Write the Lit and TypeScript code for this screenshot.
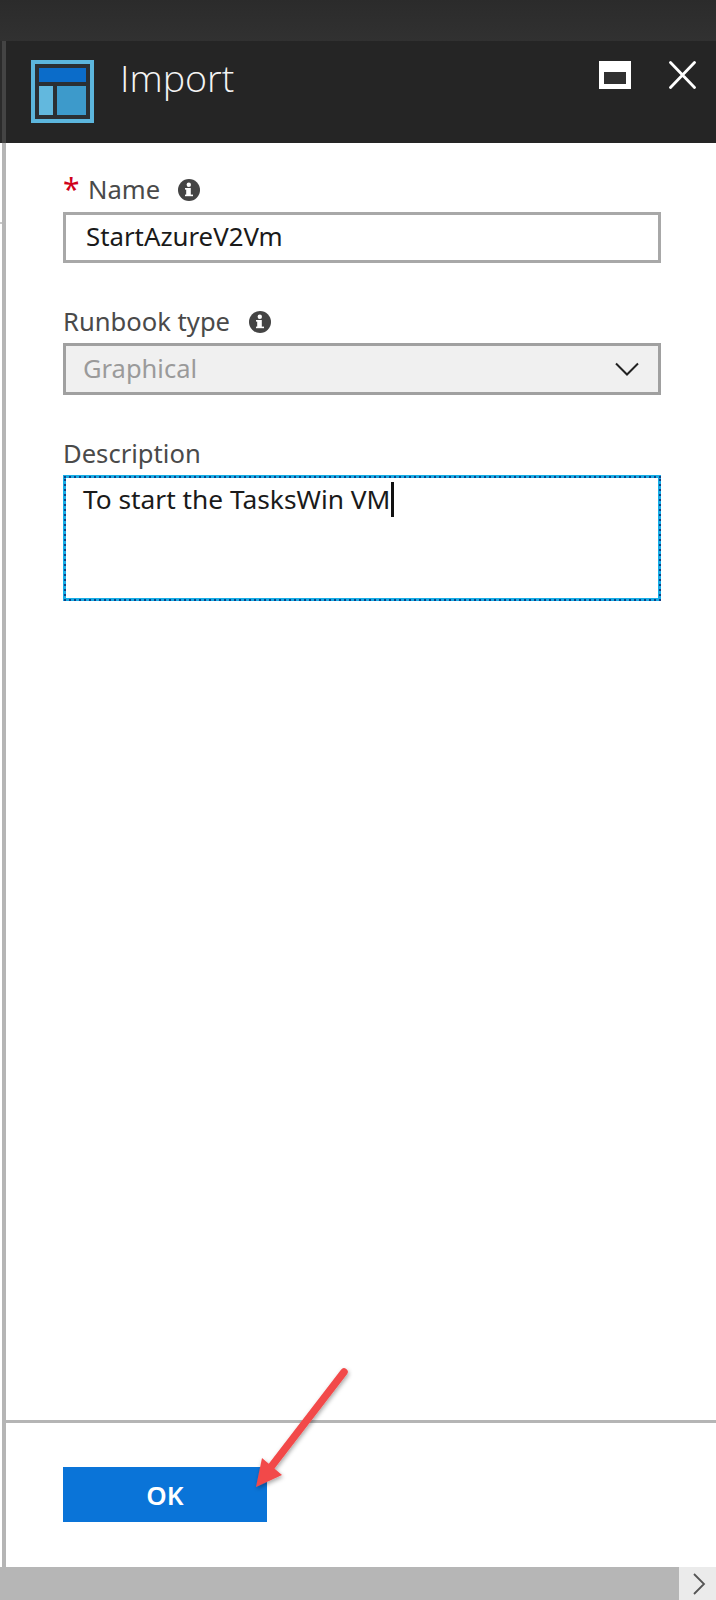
import { LitElement, html, css } from "lit";
import { customElement } from "lit/decorators.js";

const info = html`<svg class="info" viewBox="0 0 22 22"><circle cx="11" cy="11" r="11" fill="#444"/><rect x="8.2" y="9" width="4.6" height="8" fill="#fff"/><rect x="7" y="9" width="3" height="1.6" fill="#fff"/><rect x="7" y="15.6" width="8" height="1.6" fill="#fff"/><circle cx="10.8" cy="5.8" r="2.2" fill="#fff"/></svg>`;

@customElement("app-root")
export class AppRoot extends LitElement {
  static styles = css`
    :host { display: flex; flex-direction: column; width: 716px; height: 1600px; background: #fff; font-family: "Noto Sans", "Open Sans", sans-serif; position: relative; overflow: hidden; }
    .top { height: 41px; flex: none; background: linear-gradient(#2b2b2b, #313131); }
    .head { height: 102px; flex: none; background: #252525; border-left: 4px solid #444; margin-left: 2px; display: flex; padding: 19px 20px 0 25px; box-sizing: border-box; box-shadow: -2px 0 0 #2b2b2b; }
    .logo { width: 63px; height: 63px; flex: none; }
    .title { margin: -8px 0 0 26px; font: 300 37.6px/52px "Open Sans", sans-serif; color: #f4f4f4; flex: 1; }
    .win { width: 32px; height: 28px; margin-top: 1px; flex: none; }
    .close { width: 27px; height: 28px; margin: 1px 0 0 38px; flex: none; }
    .body { flex: 1; margin-left: 2px; border-left: 4px solid #b5b5b5; display: flex; flex-direction: column; min-height: 0; }
    .form { flex: 1; padding: 0 55px 0 57px; display: flex; flex-direction: column; }
    .label { display: flex; align-items: center; font-size: 25.6px; line-height: 32px; color: #4a4a4a; }
    .label.name { margin-top: 27px; height: 42px; padding-bottom: 2px; box-sizing: border-box; }
    .label.rb { margin-top: 39px; height: 41px; padding-bottom: 2px; box-sizing: border-box; }
    .label.desc { margin-top: 37px; height: 43px; }
    .star { color: #d0021b; font-size: 30px; line-height: 30px; width: 25px; align-self: flex-start; margin-top: 4px; }
    .info { width: 22px; height: 22px; margin-left: 18px; flex: none; }
    .rb .info { margin-left: 19px; }
    .field { box-sizing: border-box; height: 51px; border: 3px solid #a8a8a8; display: flex; align-items: center; padding: 0 0 4px 20px; font-size: 25.8px; color: #1a1a1a; }
    .field.sel { height: 52px; background: #f0f0f0; border-color: #a0a0a0; color: #9a9a9a; justify-content: space-between; padding: 0 19px 2px 17px; font-size: 25.5px; }
    .chev { width: 24px; height: 14px; flex: none; margin-top: 2px; }
    .area { position: relative; box-sizing: border-box; height: 126px; border: 3px solid #16ade6; padding: 4px 0 0 17px; font-size: 26.3px; line-height: 34px; color: #1a1a1a; display: flex; align-items: flex-start; }
    .area::before {
      content: ""; position: absolute; inset: -2.5px; pointer-events: none;
      background:
        repeating-linear-gradient(90deg, #123f86 0 2.5px, transparent 2.5px 5px) top / 100% 2px no-repeat,
        repeating-linear-gradient(90deg, #123f86 0 2.5px, transparent 2.5px 5px) bottom / 100% 2px no-repeat,
        repeating-linear-gradient(0deg, #123f86 0 2.5px, transparent 2.5px 5px) left / 2px 100% no-repeat,
        repeating-linear-gradient(0deg, #123f86 0 2.5px, transparent 2.5px 5px) right / 2px 100% no-repeat;
    }
    .caret { width: 2.5px; height: 35px; background: #111; margin-left: 1px; margin-top: 0; }
    .foot { flex: none; height: 147px; box-sizing: border-box; border-top: 3px solid #b5b5b5; padding: 44px 0 0 57px; }
    .ok { width: 204px; height: 55px; background: #0a74d8; color: #fff; display: flex; align-items: center; justify-content: center; font-size: 26px; font-weight: 600; }
    .scroll { height: 33px; flex: none; background: #b6b6b6; display: flex; justify-content: flex-end; }
    .sbtn { width: 37px; background: #ebebeb; display: flex; align-items: center; justify-content: center; }
    .sbtn svg { width: 14px; height: 24px; margin-left: 2px; }
    .tick { position: absolute; left: 0; top: 222px; width: 2px; height: 2px; background: #c8c8c8; }
    .arrow { position: absolute; left: 240px; top: 1360px; width: 120px; height: 140px; }
  `;

  render() {
    return html`
      <div class="top"></div>
      <div class="head">
        <svg class="logo" viewBox="0 0 63 63">
          <rect width="63" height="63" fill="#5cb6dd"/>
          <rect x="4" y="4" width="55" height="55" fill="#2b2f33"/>
          <rect x="8" y="8" width="47" height="14" fill="#0b6cc9"/>
          <rect x="8" y="26" width="14" height="29" fill="#62b8de"/>
          <rect x="26" y="26" width="29" height="29" fill="#3d9acb"/>
        </svg>
        <div class="title">Import</div>
        <svg class="win" viewBox="0 0 32 28"><rect width="32" height="28" fill="#fff"/><rect x="5" y="11" width="22" height="12" fill="#303030"/></svg>
        <svg class="close" viewBox="0 0 27 28"><path d="M1.5 1.5 L25.5 26.5 M25.5 1.5 L1.5 26.5" stroke="#fff" stroke-width="2.8" stroke-linecap="round"/></svg>
      </div>
      <div class="body">
        <div class="form">
          <div class="label name"><span class="star">*</span>Name${info}</div>
          <div class="field">StartAzureV2Vm</div>
          <div class="label rb">Runbook type${info}</div>
          <div class="field sel">Graphical
            <svg class="chev" viewBox="0 0 24 14"><path d="M1 1.5 L12 12.5 L23 1.5" fill="none" stroke="#222" stroke-width="2"/></svg>
          </div>
          <div class="label desc">Description</div>
          <div class="area"><span>To start the TasksWin VM</span><span class="caret"></span></div>
        </div>
        <div class="foot"><div class="ok">OK</div></div>
      </div>
      <div class="scroll"><div class="sbtn"><svg viewBox="0 0 14 24"><path d="M2 2 L12 12 L2 22" fill="none" stroke="#555" stroke-width="1.8"/></svg></div></div>
      <div class="tick"></div>
      <svg class="arrow" viewBox="240 1360 120 140">
        <defs><filter id="s" x="-20%" y="-20%" width="140%" height="140%"><feDropShadow dx="1" dy="2" stdDeviation="2" flood-color="#000" flood-opacity=".35"/></filter></defs>
        <g filter="url(#s)">
          <path d="M344 1372 L271 1467" stroke="#f24a4a" stroke-width="7.5" stroke-linecap="round"/>
          <path d="M256 1487 L262 1458 L282 1475 Z" fill="#f24a4a"/>
        </g>
      </svg>
    `;
  }
}
